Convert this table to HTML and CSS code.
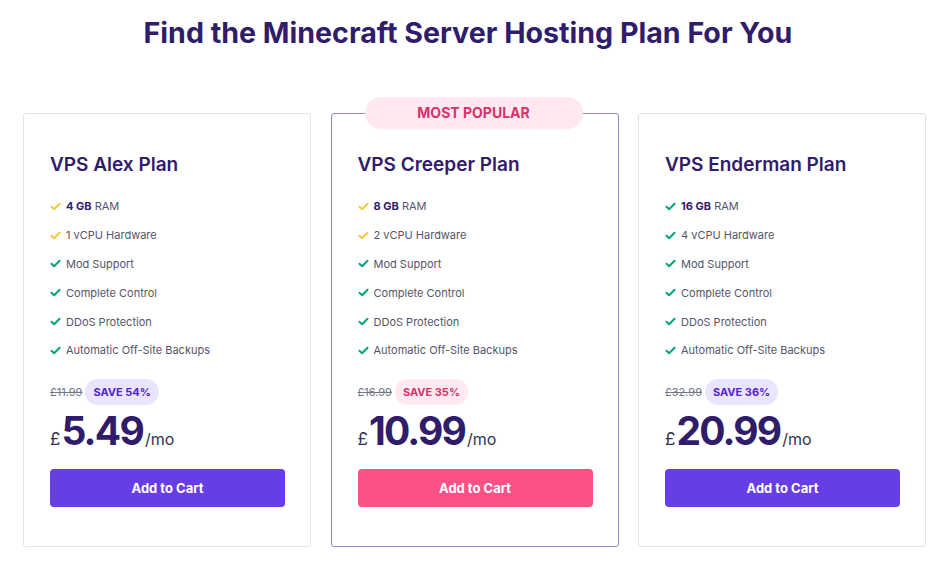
FILE: index.html
```html
<!DOCTYPE html>
<html lang="en">
<head>
<meta charset="utf-8">
<title>Minecraft Server Hosting Plans</title>
<link rel="stylesheet" href="styles.css">
</head>
<body>
<main class="page">
  <h1 class="heading">Find the Minecraft Server Hosting Plan For You</h1>
  <div class="plans">
    <section class="card">
      <h2 class="plan-name">VPS Alex Plan</h2>
      <ul class="features">
        <li><svg class="check yellow" viewBox="0 0 12 10"><path d="M1.5 5.2 L4.5 8 L10.5 2"/></svg><span><b>4 GB</b> RAM</span></li>
        <li><svg class="check yellow" viewBox="0 0 12 10"><path d="M1.5 5.2 L4.5 8 L10.5 2"/></svg><span>1 vCPU Hardware</span></li>
        <li><svg class="check green" viewBox="0 0 12 10"><path d="M1.5 5.2 L4.5 8 L10.5 2"/></svg><span>Mod Support</span></li>
        <li><svg class="check green" viewBox="0 0 12 10"><path d="M1.5 5.2 L4.5 8 L10.5 2"/></svg><span>Complete Control</span></li>
        <li><svg class="check green" viewBox="0 0 12 10"><path d="M1.5 5.2 L4.5 8 L10.5 2"/></svg><span>DDoS Protection</span></li>
        <li><svg class="check green" viewBox="0 0 12 10"><path d="M1.5 5.2 L4.5 8 L10.5 2"/></svg><span>Automatic Off-Site Backups</span></li>
      </ul>
      <div class="old-row"><s class="old">£11.99</s><span class="save">SAVE 54%</span></div>
      <div class="price"><span class="cur">£</span><span class="amount">5.49</span><span class="per">/mo</span></div>
      <button class="cart">Add to Cart</button>
    </section>
    <section class="card popular">
      <div class="ribbon">MOST POPULAR</div>
      <h2 class="plan-name">VPS Creeper Plan</h2>
      <ul class="features">
        <li><svg class="check yellow" viewBox="0 0 12 10"><path d="M1.5 5.2 L4.5 8 L10.5 2"/></svg><span><b>8 GB</b> RAM</span></li>
        <li><svg class="check yellow" viewBox="0 0 12 10"><path d="M1.5 5.2 L4.5 8 L10.5 2"/></svg><span>2 vCPU Hardware</span></li>
        <li><svg class="check green" viewBox="0 0 12 10"><path d="M1.5 5.2 L4.5 8 L10.5 2"/></svg><span>Mod Support</span></li>
        <li><svg class="check green" viewBox="0 0 12 10"><path d="M1.5 5.2 L4.5 8 L10.5 2"/></svg><span>Complete Control</span></li>
        <li><svg class="check green" viewBox="0 0 12 10"><path d="M1.5 5.2 L4.5 8 L10.5 2"/></svg><span>DDoS Protection</span></li>
        <li><svg class="check green" viewBox="0 0 12 10"><path d="M1.5 5.2 L4.5 8 L10.5 2"/></svg><span>Automatic Off-Site Backups</span></li>
      </ul>
      <div class="old-row"><s class="old">£16.99</s><span class="save pink">SAVE 35%</span></div>
      <div class="price"><span class="cur">£</span><span class="amount">10.99</span><span class="per">/mo</span></div>
      <button class="cart pink">Add to Cart</button>
    </section>
    <section class="card">
      <h2 class="plan-name">VPS Enderman Plan</h2>
      <ul class="features">
        <li><svg class="check green" viewBox="0 0 12 10"><path d="M1.5 5.2 L4.5 8 L10.5 2"/></svg><span><b>16 GB</b> RAM</span></li>
        <li><svg class="check green" viewBox="0 0 12 10"><path d="M1.5 5.2 L4.5 8 L10.5 2"/></svg><span>4 vCPU Hardware</span></li>
        <li><svg class="check green" viewBox="0 0 12 10"><path d="M1.5 5.2 L4.5 8 L10.5 2"/></svg><span>Mod Support</span></li>
        <li><svg class="check green" viewBox="0 0 12 10"><path d="M1.5 5.2 L4.5 8 L10.5 2"/></svg><span>Complete Control</span></li>
        <li><svg class="check green" viewBox="0 0 12 10"><path d="M1.5 5.2 L4.5 8 L10.5 2"/></svg><span>DDoS Protection</span></li>
        <li><svg class="check green" viewBox="0 0 12 10"><path d="M1.5 5.2 L4.5 8 L10.5 2"/></svg><span>Automatic Off-Site Backups</span></li>
      </ul>
      <div class="old-row"><s class="old">£32.99</s><span class="save">SAVE 36%</span></div>
      <div class="price"><span class="cur">£</span><span class="amount">20.99</span><span class="per">/mo</span></div>
      <button class="cart">Add to Cart</button>
    </section>
  </div>
</main>
</body>
</html>
```
FILE: styles.css
```css
* { box-sizing: border-box; }
html, body { margin: 0; padding: 0; background: #fff; }
body {
  font-family: Inter, "Noto Sans", "DejaVu Sans", sans-serif;
  color: #2f1c6a;
}
.page {
  width: 952px;
  padding: 15px 23px 0 23px;
}
.heading {
  margin: 0;
  padding-right: 16px;
  text-align: center;
  font-size: 28.6px;
  line-height: 36px;
  font-weight: 700;
  color: #2f1c6a;
}
.plans {
  margin-top: 62px;
  display: flex;
  gap: 19.5px;
}
.card {
  position: relative;
  width: 288px;
  height: 434px;
  border: 1px solid #e3e3ec;
  border-radius: 3px;
  padding: 38px 26px 0 26px;
  display: flex;
  flex-direction: column;
}
.card.popular { border-color: #8f8bc2; }
.ribbon {
  position: absolute;
  top: -17px;
  left: 33px;
  width: 218px;
  height: 32px;
  border-radius: 16px;
  background: #ffe8ef;
  color: #d6336b;
  font-size: 14px;
  font-weight: 700;
  line-height: 32px;
  text-align: center;
}
.plan-name {
  margin: 0;
  font-size: 19px;
  line-height: 26px;
  font-weight: 600;
  color: #2f1c6a;
}
.features {
  list-style: none;
  margin: 14px 0 0 0;
  padding: 0;
}
.features li {
  display: flex;
  align-items: center;
  height: 28.8px;
  font-size: 11px;
  color: #55546a;
}
.features b { font-weight: 700; color: #2f1c6a; }
.check {
  width: 11px;
  height: 9px;
  margin-right: 5px;
  fill: none;
  stroke-width: 2.2;
  stroke-linecap: round;
  stroke-linejoin: round;
}
.check.yellow { stroke: #f7c940; }
.check.green { stroke: #00a37c; }
.old-row {
  margin-top: 14px;
  display: flex;
  align-items: center;
  gap: 3px;
}
.old {
  font-size: 11px;
  color: #727586;
}
.save {
  height: 26px;
  line-height: 26px;
  padding: 0 8px;
  border-radius: 13px;
  background: #ebe4ff;
  color: #5025d1;
  font-size: 11px;
  font-weight: 700;
}
.save.pink { background: #ffe8ef; color: #d6336b; }
.price {
  margin-top: 1px;
  display: flex;
  align-items: baseline;
  color: #2f1c6a;
  height: 50px;
}
.cur { font-size: 17px; color: #36344d; margin-right: 1px; }
.amount {
  font-size: 39px;
  line-height: 50px;
  font-weight: 700;
  letter-spacing: -1.8px;
}
.per { font-size: 16px; color: #36344d; margin-left: 2px; }
.cart {
  margin-top: 13px;
  width: 235px;
  height: 38px;
  border: 0;
  border-radius: 4px;
  background: #673de6;
  color: #fff;
  font-family: inherit;
  font-size: 13px;
  font-weight: 700;
  cursor: pointer;
}
.cart.pink { background: #fc5185; }
```
